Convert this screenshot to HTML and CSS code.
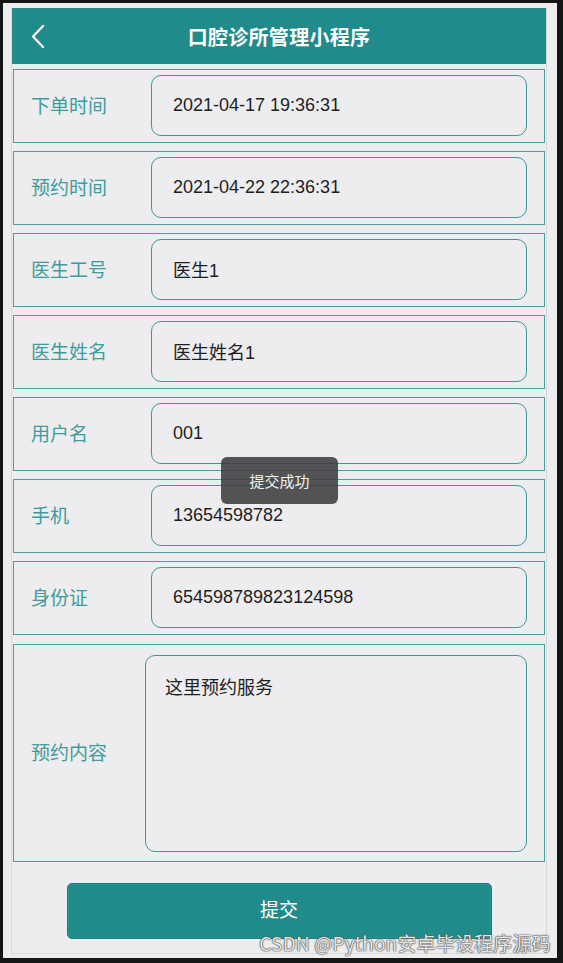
FILE: index.html
```html
<!DOCTYPE html>
<html lang="zh-CN">
<head>
<meta charset="utf-8">
<title>口腔诊所管理小程序</title>
<link rel="stylesheet" href="styles.css">
</head>
<body>
<div class="screen">
  <div class="page">
    <header class="bar">
      <svg class="back" width="16" height="24" viewBox="0 0 16 24"><polyline points="13,2 3,12.5 13,23" fill="none" stroke="#fff" stroke-width="2.2" stroke-linecap="round" stroke-linejoin="round"/></svg>
      <h1 class="title">口腔诊所管理小程序</h1>
    </header>
    <div class="form">
      <div class="row"><span class="label">下单时间</span><div class="input">2021-04-17 19:36:31</div></div>
      <div class="row"><span class="label">预约时间</span><div class="input">2021-04-22 22:36:31</div></div>
      <div class="row"><span class="label">医生工号</span><div class="input">医生1</div></div>
      <div class="row"><span class="label">医生姓名</span><div class="input">医生姓名1</div></div>
      <div class="row"><span class="label">用户名</span><div class="input">001</div></div>
      <div class="row"><span class="label">手机</span><div class="input">13654598782</div></div>
      <div class="row"><span class="label">身份证</span><div class="input">654598789823124598</div></div>
      <div class="row row-tall"><span class="label label-narrow">预约内容</span><div class="textarea">这里预约服务</div></div>
    </div>
    <div class="actions"><button class="submit">提交</button></div>
  </div>
  <div class="toast">提交成功</div>
  <div class="watermark">CSDN @Python安卓毕设程序源码</div>
</div>
</body>
</html>
```
FILE: styles.css
```css
html, body {
  margin: 0;
  padding: 0;
  background: #151515;
}
body {
  width: 563px;
  height: 963px;
  overflow: hidden;
  font-family: "Noto Sans CJK SC", "Liberation Sans", sans-serif;
}
.screen {
  position: relative;
  margin: 3px 0 0 3px;
  width: 554px;
  height: 955px;
  background: #edecee;
  padding: 4px 0 0 8px;
  box-sizing: border-box;
}
.page {
  width: 536px;
  height: 947px;
  box-sizing: border-box;
  border: 1px solid #dadada;
  border-top-color: transparent;
}
.bar {
  position: relative;
  height: 56px;
  background: #218b8b;
  display: flex;
  align-items: center;
  justify-content: center;
}
.back {
  position: absolute;
  left: 18px;
  top: 16px;
}
.title {
  margin: 0;
  color: #fff;
  font-size: 20px;
  font-weight: 700;
  letter-spacing: 0.3px;
}
.form {
  display: flex;
  flex-direction: column;
  gap: 8px;
  margin: 5px 1px 0;
}
.row {
  height: 74px;
  box-sizing: border-box;
  border: 1px solid #4a9e9e;
  display: flex;
  align-items: center;
  padding-right: 17px;
}
.row-tall {
  height: 218px;
  margin-top: 1px;
}
.label {
  width: 120px;
  padding-left: 17px;
  flex: none;
  color: #3f9c9c;
  font-size: 19px;
  position: relative;
  top: -2px;
}
.label-narrow {
  width: 114px;
}
.input {
  flex: 1;
  height: 61px;
  margin-top: -2px;
  box-sizing: border-box;
  border: 1px solid #3f9696;
  border-radius: 10px;
  padding-left: 21px;
  display: flex;
  align-items: center;
  font-family: "Liberation Sans", "Noto Sans CJK SC", sans-serif;
  font-size: 18px;
  color: #1e1e1e;
}
.textarea {
  flex: 1;
  height: 197px;
  margin-top: 0;
  box-sizing: border-box;
  border: 1px solid #3f9696;
  border-radius: 10px;
  padding: 17px 19px;
  font-family: "Liberation Sans", "Noto Sans CJK SC", sans-serif;
  font-size: 18px;
  color: #1e1e1e;
}
.actions {
  display: flex;
  justify-content: center;
  margin-top: 21px;
}
.submit {
  width: 425px;
  height: 56px;
  padding: 0 0 5px;
  border: 1px solid #1b7c7c;
  border-radius: 5px;
  background: #218b8b;
  color: #fff;
  font-family: "Noto Sans CJK SC", sans-serif;
  font-size: 19px;
  box-shadow: inset 0 0 0 1px #2a9393;
}
.toast {
  position: absolute;
  left: 218px;
  top: 454px;
  width: 117px;
  height: 47px;
  border-radius: 6px;
  background: rgba(62, 62, 64, 0.88);
  color: #f2f2f2;
  font-size: 15px;
  display: flex;
  align-items: center;
  justify-content: center;
}
.watermark {
  position: absolute;
  right: 6px;
  top: 926px;
  font-size: 19px;
  letter-spacing: 0.2px;
  color: rgba(240, 240, 240, 0.95);
  text-shadow: 0 0 1px #444, 0 0 1px #444, 0 0 2px #777;
  white-space: nowrap;
}
```
